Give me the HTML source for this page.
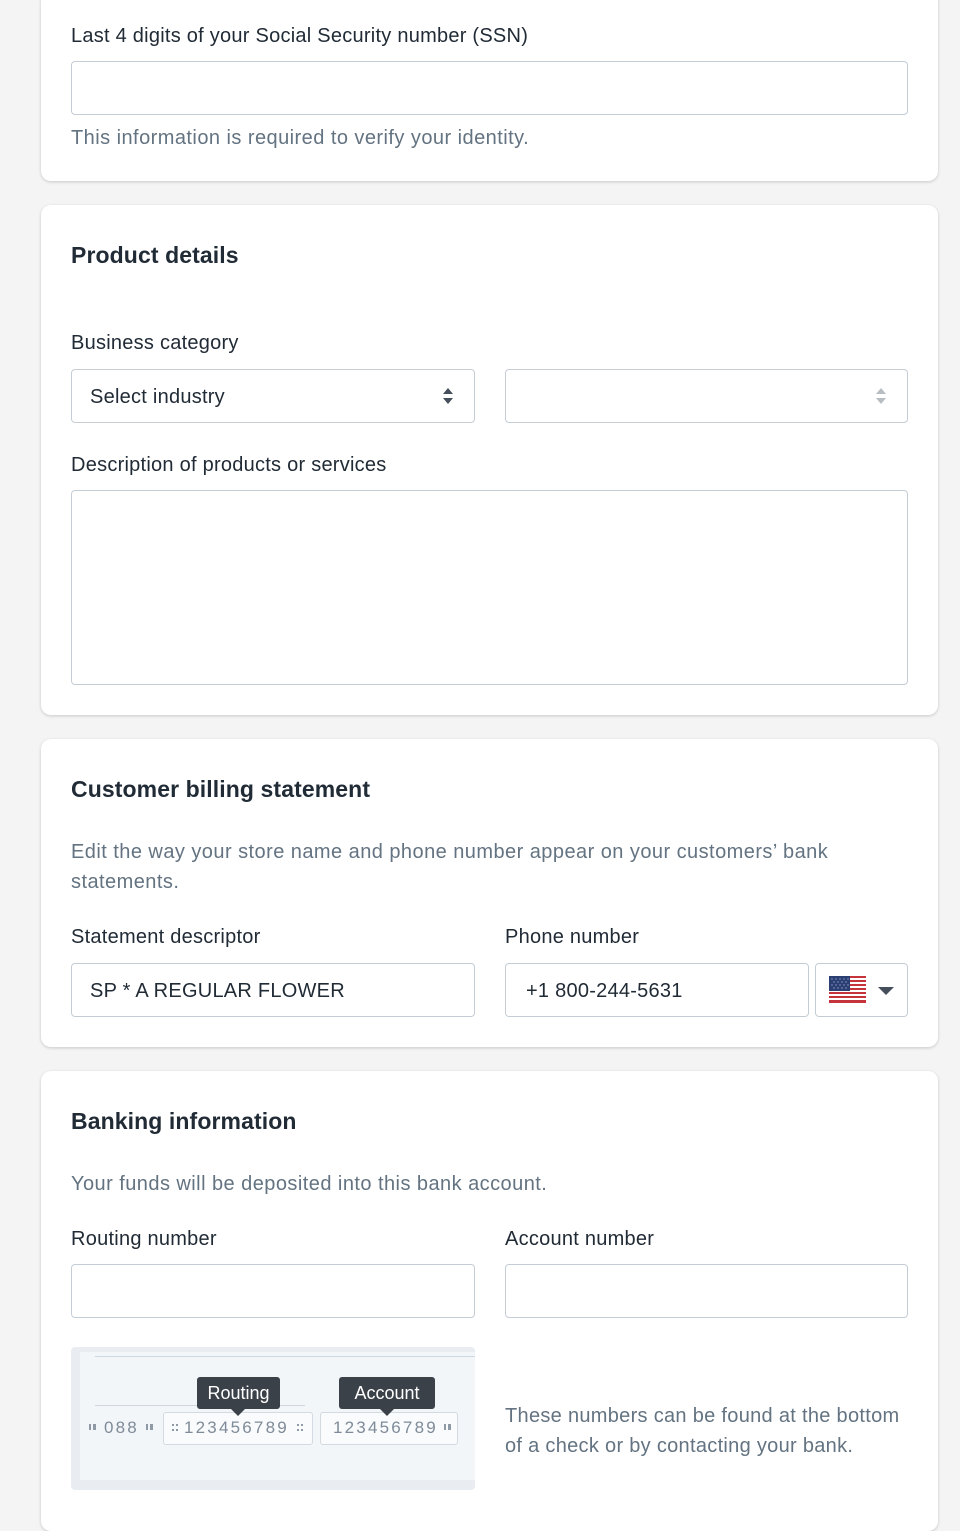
<!DOCTYPE html>
<html><head><meta charset="utf-8"><style>
*{box-sizing:border-box;margin:0;padding:0}
body{width:960px;height:1506px;background:#f4f4f4;font-family:"Liberation Sans",sans-serif;color:#212b36;position:relative;overflow:hidden}
.card{position:absolute;left:41px;width:897px;background:#fff;border-radius:10px;box-shadow:0 1px 3px rgba(0,0,0,.18)}
.a{position:absolute}
.lbl{font-size:20px;color:#212b36;letter-spacing:0.25px}
.h{font-size:23px;font-weight:bold;letter-spacing:0.1px}
.help{font-size:20px;color:#637381;line-height:30px;letter-spacing:0.45px}
.in{position:absolute;border:1px solid #c4cdd5;border-radius:4px;background:#fff;height:54px;font-size:20px;padding-left:18px;line-height:54px;letter-spacing:0.25px}
.m{position:absolute;font-size:17px;color:#7f8b98;letter-spacing:2.2px;white-space:pre}
</style></head><body>
<div class="card" style="top:-10px;height:191px"></div>
<div class="a lbl" style="left:71px;top:25px">Last 4 digits of your Social Security number (SSN)</div>
<div class="in" style="left:71px;top:61px;width:837px"></div>
<div class="a help" style="left:71px;top:123px">This information is required to verify your identity.</div>

<div class="card" style="top:205px;height:510px"></div>
<div class="a h" style="left:71px;top:242px">Product details</div>
<div class="a lbl" style="left:71px;top:332px">Business category</div>
<div class="in" style="left:71px;top:369px;width:404px">Select industry
<svg class="a" style="right:20px;top:16px" width="12" height="20"><path d="M1 8L6 2L11 8Z M1 12L6 18L11 12Z" fill="#454f5b"/></svg></div>
<div class="in" style="left:505px;top:369px;width:403px">
<svg class="a" style="right:20px;top:16px" width="12" height="20"><path d="M1 8L6 2L11 8Z M1 12L6 18L11 12Z" fill="#b8bdc2"/></svg></div>
<div class="a lbl" style="left:71px;top:454px">Description of products or services</div>
<div class="in" style="left:71px;top:490px;width:837px;height:195px"></div>

<div class="card" style="top:739px;height:308px"></div>
<div class="a h" style="left:71px;top:776px">Customer billing statement</div>
<div class="a help" style="left:71px;top:837px;width:820px">Edit the way your store name and phone number appear on your customers’ bank statements.</div>
<div class="a lbl" style="left:71px;top:926px">Statement descriptor</div>
<div class="a lbl" style="left:505px;top:926px">Phone number</div>
<div class="in" style="left:71px;top:963px;width:404px">SP * A REGULAR FLOWER</div>
<div class="in" style="left:505px;top:963px;width:304px;padding-left:20px">+1 800-244-5631</div>
<div class="in" style="left:815px;top:963px;width:93px">
<svg class="a" style="left:13px;top:12px" width="37" height="27" viewBox="0 0 37 27">
<rect width="37" height="27" fill="#fff"/>
<g fill="#c5333b"><rect y="0" width="37" height="2"/><rect y="4" width="37" height="2"/><rect y="8" width="37" height="2"/><rect y="12" width="37" height="2"/><rect y="16" width="37" height="2"/><rect y="20" width="37" height="2"/><rect y="24" width="37" height="3"/></g>
<rect width="21" height="15" fill="#2c3f73"/>
<g fill="#8fa0c8"><circle cx="3" cy="3" r=".7"/><circle cx="7" cy="3" r=".7"/><circle cx="11" cy="3" r=".7"/><circle cx="15" cy="3" r=".7"/><circle cx="19" cy="3" r=".7"/><circle cx="5" cy="6" r=".7"/><circle cx="9" cy="6" r=".7"/><circle cx="13" cy="6" r=".7"/><circle cx="17" cy="6" r=".7"/><circle cx="3" cy="9" r=".7"/><circle cx="7" cy="9" r=".7"/><circle cx="11" cy="9" r=".7"/><circle cx="15" cy="9" r=".7"/><circle cx="19" cy="9" r=".7"/><circle cx="5" cy="12" r=".7"/><circle cx="9" cy="12" r=".7"/><circle cx="13" cy="12" r=".7"/><circle cx="17" cy="12" r=".7"/></g></svg>
<svg class="a" style="left:62px;top:23px" width="16" height="9"><path d="M0 0H16L8 8Z" fill="#454f5b"/></svg></div>

<div class="card" style="top:1071px;height:460px"></div>
<div class="a h" style="left:71px;top:1108px">Banking information</div>
<div class="a help" style="left:71px;top:1169px">Your funds will be deposited into this bank account.</div>
<div class="a lbl" style="left:71px;top:1228px">Routing number</div>
<div class="a lbl" style="left:505px;top:1228px">Account number</div>
<div class="in" style="left:71px;top:1264px;width:404px"></div>
<div class="in" style="left:505px;top:1264px;width:403px"></div>
<div class="a" style="left:71px;top:1347px;width:404px;height:143px;background:#e9edf2;border-radius:4px"></div>
<div class="a" style="left:80px;top:1352px;width:395px;height:128px;background:#f3f6f9"></div>
<div class="a" style="left:95px;top:1356px;width:380px;height:1px;background:#cfd8e0"></div>
<div class="a" style="left:95px;top:1405px;width:210px;height:1px;background:#cfd8e0"></div>
<div class="a" style="left:163px;top:1412px;width:150px;height:33px;border:1px solid #d3dae2;border-radius:3px;background:#f9fbfc"></div>
<div class="a" style="left:320px;top:1412px;width:138px;height:33px;border:1px solid #d3dae2;border-radius:3px;background:#f9fbfc"></div>
<div class="m" style="left:104px;top:1418px">088</div>
<div class="m" style="left:184px;top:1418px">123456789</div>
<div class="m" style="left:333px;top:1418px">123456789</div>
<div class="a" style="left:89px;top:1424px;width:7px;height:6px;border-left:2px solid #8f9aa6;border-right:3px solid #8f9aa6"></div>
<div class="a" style="left:146px;top:1424px;width:7px;height:6px;border-left:2px solid #8f9aa6;border-right:3px solid #8f9aa6"></div>
<div class="a" style="left:172px;top:1424px;width:6px;height:7px;border-left:2px dotted #8f9aa6;border-right:2px dotted #8f9aa6"></div>
<div class="a" style="left:297px;top:1424px;width:6px;height:7px;border-left:2px dotted #8f9aa6;border-right:2px dotted #8f9aa6"></div>
<div class="a" style="left:444px;top:1424px;width:7px;height:6px;border-left:2px solid #8f9aa6;border-right:3px solid #8f9aa6"></div>
<div class="a" style="left:197px;top:1377px;width:83px;height:32px;background:#3b4148;border-radius:3px;color:#fff;font-size:18px;text-align:center;line-height:32px">Routing</div>
<div class="a" style="left:339px;top:1377px;width:96px;height:32px;background:#3b4148;border-radius:3px;color:#fff;font-size:18px;text-align:center;line-height:32px">Account</div>
<svg class="a" style="left:230px;top:1408px" width="16" height="9"><path d="M0 0H16L8 8Z" fill="#3b4148"/></svg>
<svg class="a" style="left:379px;top:1408px" width="16" height="9"><path d="M0 0H16L8 8Z" fill="#3b4148"/></svg>
<div class="a help" style="left:505px;top:1401px;width:405px;letter-spacing:0.3px">These numbers can be found at the bottom of a check or by contacting your bank.</div>
</body></html>
